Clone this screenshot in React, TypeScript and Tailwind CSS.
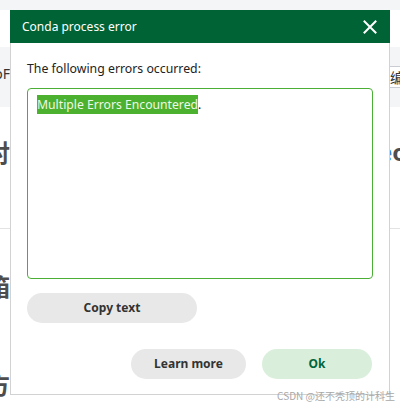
import React from "react";

const sans = "font-['Noto_Sans','Open_Sans',sans-serif]";
const cjk = "font-['Noto_Sans_CJK_SC',sans-serif]";

export default function App() {
  return (
    <div className={`relative w-[400px] h-[407px] overflow-hidden bg-white ${sans}`}>
      {/* Background page */}
      <div className="flex flex-col w-full">
        <div className="h-[10px] bg-[#f4f5f7]" />
        <div className="h-[37px] bg-white" />
        <div className="h-[60px] bg-[#f4f5f7] flex justify-between items-center">
          <div className="w-[10px] overflow-hidden flex justify-end whitespace-nowrap text-[14px] text-[#333] mt-[-8px]">
            NoF
          </div>
          <div className="w-[10px] overflow-hidden flex flex-col self-stretch pt-[19px]">
            <div className={`h-[22px] border-y border-[#c9ccd2] bg-white text-[14px] leading-[20px] text-[#333] whitespace-nowrap ${cjk}`}>
              编辑
            </div>
          </div>
        </div>
        <div className="h-[121px] flex justify-between pt-[28px]">
          <div className={`w-[10px] overflow-hidden flex justify-end whitespace-nowrap text-[24px] leading-[34px] font-bold text-[#4d4d4d] ${cjk}`}>
            对
          </div>
          <div className="w-[10px] overflow-hidden whitespace-nowrap text-[24px] leading-[34px] font-bold text-[#4d4d4d]">
            <span className="text-[#3b82d6] ml-[-12px]">e</span>o
          </div>
        </div>
        <div className="border-t border-[#e3e3e3] h-[179px] flex flex-col pt-[40px] gap-[64px]">
          <div className={`w-[10px] overflow-hidden flex justify-end whitespace-nowrap text-[24px] leading-[34px] font-bold text-[#4d4d4d] ${cjk}`}>
            箱
          </div>
          <div className={`w-[10px] overflow-hidden flex justify-end whitespace-nowrap text-[24px] leading-[34px] font-bold text-[#4d4d4d] ${cjk}`}>
            方
          </div>
        </div>
      </div>

      {/* Dialog */}
      <div className="absolute left-[10px] top-[10px] w-[380px] flex flex-col bg-white border border-t-0 border-[#d2d2d2]">
        <div className="h-[33px] bg-[#006336] flex items-center justify-between pl-[12px] pr-[13px] mx-[-1px]">
          <span className="text-white text-[12px]">Conda process error</span>
          <svg width="14" height="14" viewBox="0 0 14 14" className="block">
            <path d="M1.5 1.5 L12.5 12.5 M12.5 1.5 L1.5 12.5" stroke="white" strokeWidth="2" strokeLinecap="square" />
          </svg>
        </div>
        <div className="flex flex-col px-[16px] pt-[16px] pb-[15px]">
          <div className="text-[12.3px] leading-[20px] text-[#222]">The following errors occurred:</div>
          <div className="mt-[9px] h-[191px] border border-[#4caf35] rounded-[4px] px-[9px] pt-[6px] text-[12.2px] leading-[20px] text-[#222]">
            <span className="bg-[#4bb12e] text-[#eef8e8] py-[1px]">Multiple Errors Encountered</span>.
          </div>
          <button className="mt-[14px] w-[170px] h-[30px] rounded-full bg-[#e8e8e8] text-[12px] font-bold text-[#333] flex items-center justify-center">
            Copy text
          </button>
          <div className="mt-[26px] flex justify-end gap-[16px] pr-[1px]">
            <button className="w-[115px] h-[30px] rounded-full bg-[#e8e8e8] text-[12px] font-bold text-[#333] flex items-center justify-center">
              Learn more
            </button>
            <button className="w-[110px] h-[30px] rounded-full bg-[#d9efdb] text-[12px] font-bold text-[#00653a] flex items-center justify-center">
              Ok
            </button>
          </div>
        </div>
      </div>

      {/* Watermark */}
      <div className={`absolute right-[5px] bottom-[4px] text-[10px] leading-[14px] text-[#a8a8a8] whitespace-nowrap ${cjk}`}>
        CSDN @还不秃顶的计科生
      </div>
    </div>
  );
}
